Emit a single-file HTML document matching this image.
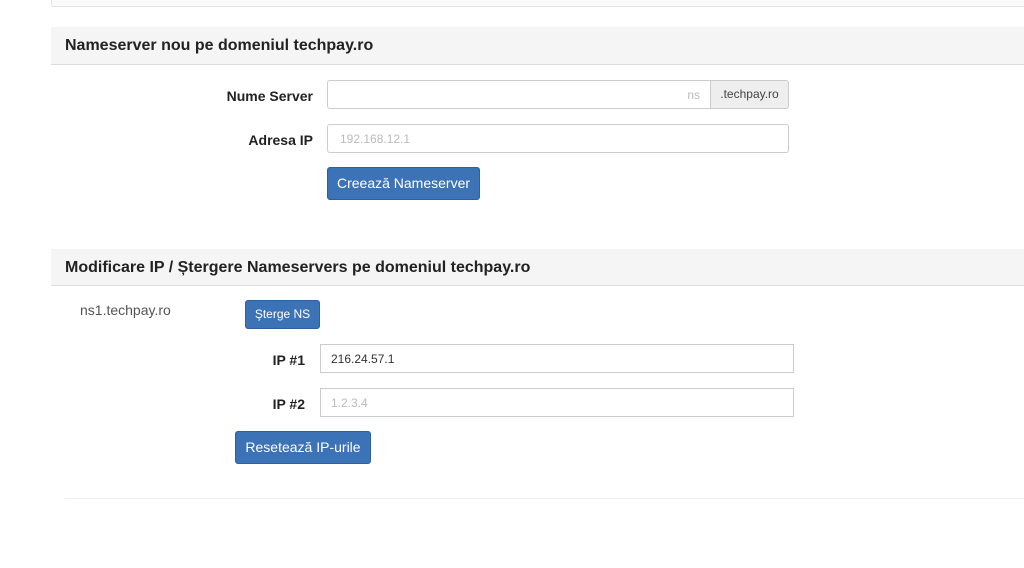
<!DOCTYPE html>
<html><head><meta charset="utf-8"><style>
body{margin:0;width:1024px;height:568px;background:#fff;font-family:"Liberation Sans",sans-serif;position:relative;overflow:hidden;color:#333}
.a{position:absolute;box-sizing:border-box}
.hd{left:51px;width:980px;background:#f5f5f5;border-bottom:1px solid #ddd;font-size:16px;font-weight:bold;padding-left:14px;color:#222}
.inp{border:1px solid #ccc;border-radius:3px;background:#fff;font-size:12px;color:#bbb;padding-left:12px;line-height:28px}
.lbl{font-size:14px;font-weight:bold;text-align:right;color:#222}
.btn{background:#3c72b6;border:1px solid #2e5f9e;border-radius:3px;color:#fff;font-size:14px;text-align:center}
</style></head><body>
<div class="a" style="left:51px;top:-4px;width:980px;height:11px;border:1px solid #e3e3e3;border-top:none;border-radius:0 0 3px 3px;background:#fafafa"></div>
<div class="a hd" style="top:27px;height:38px;line-height:38px">Nameserver nou pe domeniul techpay.ro</div>
<div class="a lbl" style="left:180px;width:133px;top:88px">Nume Server</div>
<div class="a inp" style="left:327px;top:80px;width:384px;height:29px;border-radius:3px 0 0 3px;text-align:right;padding-right:10px">ns</div>
<div class="a" style="left:710px;top:80px;width:79px;height:29px;background:#eee;border:1px solid #ccc;border-radius:0 3px 3px 0;font-size:12px;line-height:27px;text-align:center;color:#444">.techpay.ro</div>
<div class="a lbl" style="left:180px;width:133px;top:132px">Adresa IP</div>
<div class="a inp" style="left:327px;top:124px;width:462px;height:29px">192.168.12.1</div>
<div class="a btn" style="left:327px;top:167px;width:153px;height:33px;line-height:31px">Creează Nameserver</div>
<div class="a hd" style="top:249px;height:37px;line-height:37px">Modificare IP / Ștergere Nameservers pe domeniul techpay.ro</div>
<div class="a" style="left:80px;top:302px;font-size:14px;color:#555">ns1.techpay.ro</div>
<div class="a btn" style="left:245px;top:300px;width:75px;height:29px;line-height:27px;font-size:12px">Şterge NS</div>
<div class="a lbl" style="left:200px;width:105px;top:352px">IP #1</div>
<div class="a inp" style="left:320px;top:344px;width:474px;height:29px;color:#333;border-radius:0;padding-left:10px">216.24.57.1</div>
<div class="a lbl" style="left:200px;width:105px;top:396px">IP #2</div>
<div class="a inp" style="left:320px;top:388px;width:474px;height:29px;border-radius:0;padding-left:10px">1.2.3.4</div>
<div class="a btn" style="left:235px;top:431px;width:136px;height:33px;line-height:31px">Resetează IP-urile</div>
<div class="a" style="left:65px;top:498px;width:970px;height:1px;background:#eee"></div>
</body></html>
